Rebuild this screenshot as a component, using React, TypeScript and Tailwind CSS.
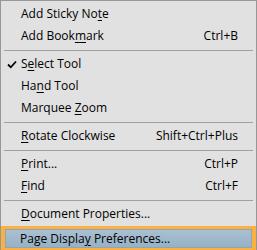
import React from "react";

const U = ({ c }: { c: string }) => <span className="underline underline-offset-2 decoration-1">{c}</span>;

function Row({ children, shortcut, check }: { children: React.ReactNode; shortcut?: string; check?: boolean }) {
  return (
    <div className="flex h-[22px] items-center pl-[20px] pr-[18px] relative">
      {check && (
        <svg className="absolute left-[6px] top-[7px]" width="10" height="9" viewBox="0 0 10 9">
          <path d="M1 4.5 L3.8 7.3 L9 1.5" stroke="#000" strokeWidth="1.8" fill="none" />
        </svg>
      )}
      <span className="flex-1">{children}</span>
      {shortcut && <span>{shortcut}</span>}
    </div>
  );
}

const Sep = () => (
  <div className="h-[6px] flex items-center px-[3px]">
    <div className="h-px w-full bg-[#a0a0a0]" />
  </div>
);

export default function App() {
  return (
    <div
      className="w-[257px] h-[250px] overflow-hidden bg-[#e1e1e1] border-l border-t border-r border-[#979797] text-[12px] text-black leading-none"
      style={{ fontFamily: '"Open Sans", "Noto Sans", sans-serif' }}
    >
      <div className="pt-[2px]">
        <Row>Add Sticky No<U c="t" />e</Row>
        <Row shortcut="Ctrl+B">Add Book<U c="m" />ark</Row>
        <Sep />
        <Row check>S<U c="e" />lect Tool</Row>
        <Row>Ha<U c="n" />d Tool</Row>
        <Row>Marquee <U c="Z" />oom</Row>
        <Sep />
        <Row shortcut="Shift+Ctrl+Plus"><U c="R" />otate Clockwise</Row>
        <Sep />
        <Row shortcut="Ctrl+P"><U c="P" />rint...</Row>
        <Row shortcut="Ctrl+F"><U c="F" />ind</Row>
        <Sep />
        <Row><U c="D" />ocument Properties...</Row>
        <div className="-ml-px -mr-px mt-[1px] bg-[#fbb03f] pt-[3px] pb-[3px] px-[5px]">
          <div className="h-[19px] flex items-center pl-[14px] border border-[#8ea6b8] bg-gradient-to-b from-[#a9c0d2] to-[#97b1c5]">
            <span>Page Displa<U c="y" /> Preferences...</span>
          </div>
        </div>
      </div>
    </div>
  );
}
